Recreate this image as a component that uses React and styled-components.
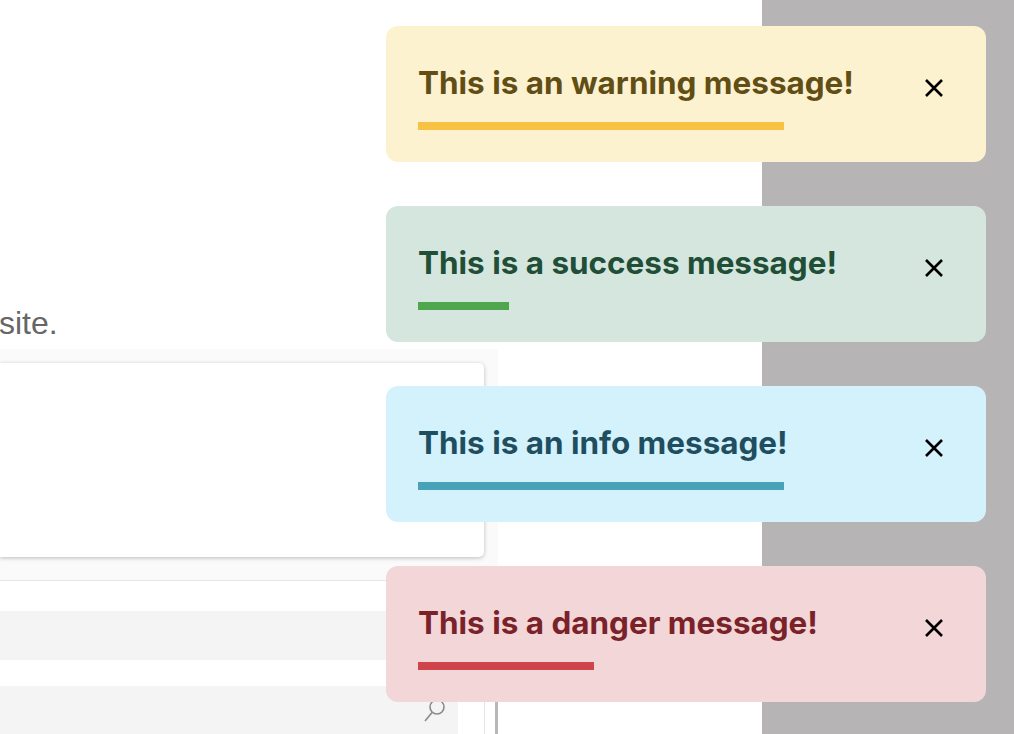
import React from "react";
import styled, { createGlobalStyle } from "styled-components";

const GlobalStyle = createGlobalStyle`
  html, body {
    margin: 0;
    padding: 0;
    background: #fff;
    overflow: hidden;
  }
`;

const Page = styled.div`
  display: flex;
  width: 1014px;
  height: 734px;
  overflow: hidden;
`;

const Content = styled.main`
  width: 762px;
  height: 734px;
  background: #fff;
  overflow: hidden;
  padding-top: 305px;
  box-sizing: border-box;
`;

const Backdrop = styled.aside`
  flex: 1;
  background: #b7b4b5;
`;

const Intro = styled.p`
  margin: 0 0 0 -1px;
  height: 44px;
  font: 400 32px/36px "Liberation Sans", Arial, sans-serif;
  color: #666;
`;

const Preview = styled.section`
  width: 498px;
  height: 232px;
  padding: 14px 14px 0 0;
  box-sizing: border-box;
  background: #fafafa;
  border-bottom: 1px solid #e6e6e6;
`;

const PreviewCard = styled.div`
  height: 194px;
  background: #fff;
  border-radius: 0 5px 5px 0;
  box-shadow: 0 1px 4px rgba(0, 0, 0, 0.25);
`;

const Lower = styled.section`
  display: flex;
  width: 498px;
  height: 153px;
`;

const Fields = styled.div`
  display: flex;
  flex-direction: column;
  gap: 26px;
  width: 485px;
  padding: 30px 26px 0 0;
  box-sizing: border-box;
  border-right: 1px solid #e4e4e4;
`;

const Field = styled.div`
  display: flex;
  align-items: center;
  justify-content: flex-end;
  height: ${(p) => p.$height}px;
  flex-shrink: 0;
  padding-right: 11px;
  background: #f4f4f4;
`;

const Rule = styled.div`
  width: 3px;
  margin-left: 10px;
  background: #b8b8b8;
`;

const ToastStack = styled.div`
  position: absolute;
  top: 26px;
  left: 386px;
  display: flex;
  flex-direction: column;
  gap: 44px;
  width: 600px;
`;

const tones = {
  warning: { bg: "#fdf2d0", fg: "#614e15", bar: "#f7c244" },
  success: { bg: "#d5e6de", fg: "#204e36", bar: "#4ea64f" },
  info: { bg: "#d4f2fb", fg: "#1f4e60", bar: "#48a2b8" },
  danger: { bg: "#f2d6d8", fg: "#7a2229", bar: "#cf434a" },
};

const Toast = styled.div`
  display: flex;
  justify-content: space-between;
  height: 136px;
  padding: 36px 42px 0 32px;
  box-sizing: border-box;
  border-radius: 12px;
  background: ${(p) => tones[p.$tone].bg};
  color: ${(p) => tones[p.$tone].fg};
`;

const ToastBody = styled.div`
  display: flex;
  flex-direction: column;
  gap: 18px;
`;

const ToastText = styled.div`
  font: 700 31.45px/42px Inter, "Noto Sans", sans-serif;
  white-space: nowrap;
`;

const Progress = styled.div`
  height: 8px;
  background: ${(p) => tones[p.$tone].bar};
`;

const CloseButton = styled.button`
  display: flex;
  align-self: flex-start;
  margin-top: 16px;
  padding: 0;
  border: 0;
  background: none;
  color: #000;
`;

const CloseIcon = () => (
  <svg width="20" height="20" viewBox="0 0 20 20" fill="none" stroke="currentColor" strokeWidth="2.6">
    <path d="M2 2 L18 18 M18 2 L2 18" />
  </svg>
);

const SearchIcon = () => (
  <svg width="24" height="24" viewBox="0 0 24 24" fill="none" stroke="#8a8a8a" strokeWidth="1.6">
    <circle cx="14" cy="9" r="7" />
    <path d="M9 14.5 L2 23" />
  </svg>
);

const messages = [
  { tone: "warning", text: "This is an warning message!", width: 366 },
  { tone: "success", text: "This is a success message!", width: 91 },
  { tone: "info", text: "This is an info message!", width: 366 },
  { tone: "danger", text: "This is a danger message!", width: 176 },
];

export default function App() {
  return (
    <>
      <GlobalStyle />
      <Page>
        <Content>
          <Intro>site.</Intro>
          <Preview>
            <PreviewCard />
          </Preview>
          <Lower>
            <Fields>
              <Field $height={49} />
              <Field $height={48}>
                <SearchIcon />
              </Field>
            </Fields>
            <Rule />
          </Lower>
        </Content>
        <Backdrop />
      </Page>
      <ToastStack>
        {messages.map((m) => (
          <Toast key={m.tone} $tone={m.tone}>
            <ToastBody>
              <ToastText>{m.text}</ToastText>
              <Progress $tone={m.tone} style={{ width: m.width }} />
            </ToastBody>
            <CloseButton aria-label="Close">
              <CloseIcon />
            </CloseButton>
          </Toast>
        ))}
      </ToastStack>
    </>
  );
}
